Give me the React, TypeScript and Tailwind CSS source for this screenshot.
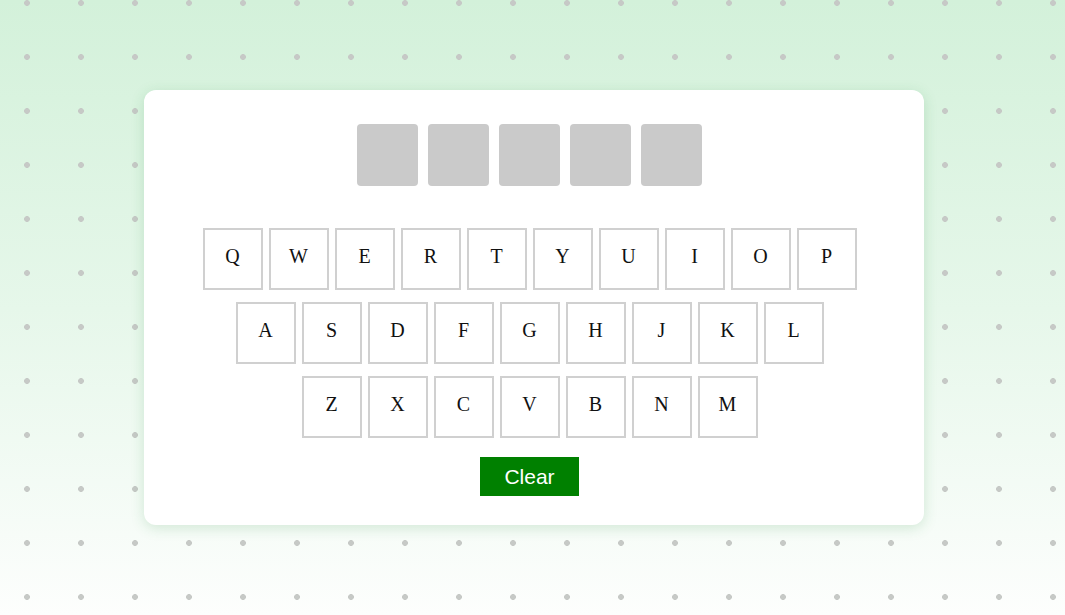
import React, { useState } from "react";

const rows = [
  ["Q", "W", "E", "R", "T", "Y", "U", "I", "O", "P"],
  ["A", "S", "D", "F", "G", "H", "J", "K", "L"],
  ["Z", "X", "C", "V", "B", "N", "M"],
];

export default function App() {
  const [letters, setLetters] = useState<string[]>([]);

  const press = (k: string) => {
    if (letters.length < 5) setLetters([...letters, k]);
  };

  return (
    <div className="h-[615px] w-full bg-gradient-to-b from-[#d3f1da] via-[#e6f7ea] to-[#fdfefd]">
      <div className="flex h-full w-full items-center justify-center bg-[radial-gradient(circle,#c6c9c6_2.6px,transparent_3.2px)] bg-[length:54px_54px] bg-[position:0_-24px]">
        <div className="ml-[2px] flex h-[435px] w-[780px] flex-col items-center rounded-xl bg-white pr-[8px] pt-[34px] shadow-[0_3px_14px_rgba(40,140,60,0.18)]">
          <div className="flex gap-[10px]">
            {[0, 1, 2, 3, 4].map((i) => (
              <div
                key={i}
                className="flex h-[62px] w-[61px] items-center justify-center rounded bg-[#cacaca] text-[28px] font-['Liberation_Serif',serif]"
              >
                {letters[i] ?? ""}
              </div>
            ))}
          </div>

          <div className="mt-[42px] flex flex-col items-center gap-[12px]">
            {rows.map((row, r) => (
              <div key={r} className="flex gap-[6px]">
                {row.map((k) => (
                  <button
                    key={k}
                    onClick={() => press(k)}
                    className="flex h-[62px] w-[60px] items-center justify-center border-2 border-[#d0d0d0] bg-white pb-[6px] font-['Liberation_Serif',serif] text-[20px] text-[#111]"
                  >
                    {k}
                  </button>
                ))}
              </div>
            ))}
          </div>

          <button
            onClick={() => setLetters([])}
            className="mt-[19px] h-[39px] w-[99px] bg-[#008000] font-['Liberation_Sans',Arial,sans-serif] text-[21px] text-white"
          >
            Clear
          </button>
        </div>
      </div>
    </div>
  );
}
